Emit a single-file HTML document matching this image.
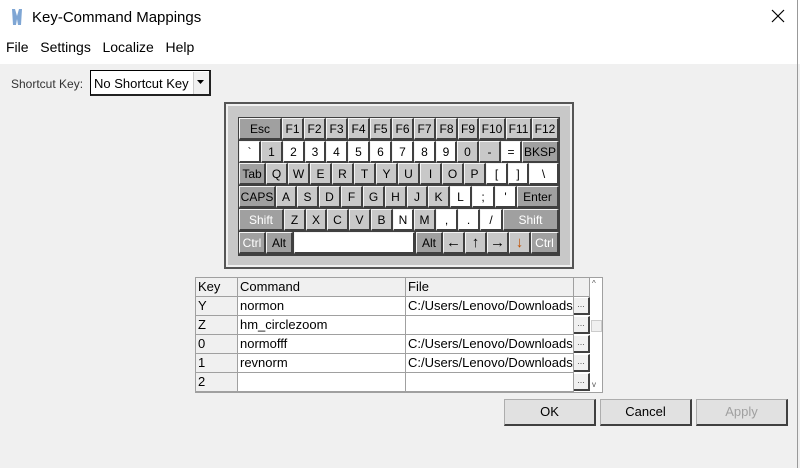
<!DOCTYPE html>
<html><head><style>
*{margin:0;padding:0;box-sizing:border-box}
body{width:800px;height:468px;background:#f0f0f0;font-family:"Liberation Sans",Arial,sans-serif;position:relative;overflow:hidden}
.a{position:absolute}
.k{position:absolute;height:22px;font-size:12px;display:flex;align-items:center;justify-content:center;border-top:1px solid #f4f4f4;border-left:1px solid #f4f4f4;border-right:2px solid #404040;border-bottom:2px solid #404040;color:#000}
.g{background:#c8c8c8}.w{background:#fff}.d{background:#a0a0a0}.wt{color:#fff}
.ar{font-size:15px}
.c{position:absolute;height:19px;border-right:1px solid #a0a0a0;border-bottom:1px solid #a0a0a0;font-size:13px;line-height:18px;padding-left:2px;white-space:nowrap;overflow:hidden}
.btn{position:absolute;top:399px;width:92px;height:27px;background:#e1e1e1;border:1px solid #adadad;border-right:2px solid #404040;border-bottom:2px solid #404040;font-size:13px;text-align:center;line-height:24px}
.dots{position:absolute;width:16px;height:18px;background:#f0f0f0;border-right:2px solid #404040;border-bottom:2px solid #404040;border-top:1px solid #fff;font-size:9px;text-align:center;line-height:12px;color:#555}
</style></head><body>
<div class="a" style="left:0;top:0;width:800px;height:64px;background:#fff"></div>
<div class="a" style="left:797px;top:0;width:1px;height:468px;background:#999"></div>
<svg class="a" style="left:10px;top:8px" width="14" height="18"><path d="M2 1 L5 1 L7 8 L9 1 L12 1 L11 17 L8 17 L7 11 L6 17 L3 17Z" fill="#7fa6d4"/></svg>
<div class="a" style="left:32px;top:9px;font-size:15px">Key-Command Mappings</div>
<svg class="a" style="left:771px;top:9px" width="14" height="14"><path d="M1 1L13 13M13 1L1 13" stroke="#000" stroke-width="1.2"/></svg>
<div class="a" style="left:6px;top:39px;font-size:14px;word-spacing:0">File&nbsp;&nbsp;&nbsp;Settings&nbsp;&nbsp;&nbsp;Localize&nbsp;&nbsp;&nbsp;Help</div>
<div class="a" style="left:11px;top:77px;font-size:12px;color:#333">Shortcut Key:</div>
<div class="a" style="left:90px;top:70px;width:121px;height:26px;background:#fff;border:1px solid #000;border-right:2px solid #222;border-bottom:2px solid #222;font-size:13px;padding:5px 3px">No Shortcut Key</div>
<div class="a" style="left:193px;top:72px;width:16px;height:22px;background:#f0f0f0;border-left:1px solid #ccc"></div>
<svg class="a" style="left:197px;top:80px" width="8" height="5"><path d="M0 0H7L3.5 4Z" fill="#000"/></svg>
<div class="a" style="left:224px;top:102px;width:350px;height:167px;background:#c8c8c8;border:2px solid #555;box-shadow:inset 0 0 0 2px #f0f0f0"></div>
<div class="a" style="left:238px;top:117px;width:322px;height:139px;background:#404040"></div>
<div class="k d" style="left:239px;top:118px;width:43px">Esc</div>
<div class="k g" style="left:282px;top:118px;width:22px">F1</div>
<div class="k g" style="left:304px;top:118px;width:22px">F2</div>
<div class="k g" style="left:326px;top:118px;width:22px">F3</div>
<div class="k g" style="left:348px;top:118px;width:22px">F4</div>
<div class="k g" style="left:370px;top:118px;width:22px">F5</div>
<div class="k g" style="left:392px;top:118px;width:22px">F6</div>
<div class="k g" style="left:414px;top:118px;width:22px">F7</div>
<div class="k g" style="left:436px;top:118px;width:22px">F8</div>
<div class="k g" style="left:458px;top:118px;width:21px">F9</div>
<div class="k g" style="left:479px;top:118px;width:27px">F10</div>
<div class="k g" style="left:506px;top:118px;width:26px">F11</div>
<div class="k g" style="left:532px;top:118px;width:27px">F12</div>
<div class="k w" style="left:239px;top:141px;width:22px">`</div>
<div class="k g" style="left:261px;top:141px;width:22px">1</div>
<div class="k w" style="left:283px;top:141px;width:22px">2</div>
<div class="k w" style="left:305px;top:141px;width:21px">3</div>
<div class="k w" style="left:326px;top:141px;width:22px">4</div>
<div class="k w" style="left:348px;top:141px;width:22px">5</div>
<div class="k w" style="left:370px;top:141px;width:22px">6</div>
<div class="k w" style="left:392px;top:141px;width:22px">7</div>
<div class="k w" style="left:414px;top:141px;width:22px">8</div>
<div class="k w" style="left:436px;top:141px;width:21px">9</div>
<div class="k g" style="left:457px;top:141px;width:22px">0</div>
<div class="k g" style="left:479px;top:141px;width:22px">-</div>
<div class="k w" style="left:501px;top:141px;width:21px">=</div>
<div class="k d" style="left:522px;top:141px;width:37px">BKSP</div>
<div class="k d" style="left:239px;top:163px;width:27px">Tab</div>
<div class="k g" style="left:266px;top:163px;width:22px">Q</div>
<div class="k g" style="left:288px;top:163px;width:22px">W</div>
<div class="k g" style="left:310px;top:163px;width:22px">E</div>
<div class="k g" style="left:332px;top:163px;width:22px">R</div>
<div class="k g" style="left:354px;top:163px;width:22px">T</div>
<div class="k g" style="left:376px;top:163px;width:22px">Y</div>
<div class="k g" style="left:398px;top:163px;width:22px">U</div>
<div class="k g" style="left:420px;top:163px;width:22px">I</div>
<div class="k g" style="left:442px;top:163px;width:22px">O</div>
<div class="k g" style="left:464px;top:163px;width:22px">P</div>
<div class="k w" style="left:486px;top:163px;width:22px">[</div>
<div class="k w" style="left:508px;top:163px;width:21px">]</div>
<div class="k w" style="left:529px;top:163px;width:30px">\</div>
<div class="k d" style="left:239px;top:186px;width:37px">CAPS</div>
<div class="k g" style="left:276px;top:186px;width:21px">A</div>
<div class="k g" style="left:297px;top:186px;width:22px">S</div>
<div class="k g" style="left:319px;top:186px;width:22px">D</div>
<div class="k g" style="left:341px;top:186px;width:22px">F</div>
<div class="k g" style="left:363px;top:186px;width:22px">G</div>
<div class="k g" style="left:385px;top:186px;width:22px">H</div>
<div class="k g" style="left:407px;top:186px;width:21px">J</div>
<div class="k g" style="left:428px;top:186px;width:22px">K</div>
<div class="k w" style="left:450px;top:186px;width:22px">L</div>
<div class="k w" style="left:472px;top:186px;width:23px">;</div>
<div class="k w" style="left:495px;top:186px;width:22px">'</div>
<div class="k d" style="left:517px;top:186px;width:42px">Enter</div>
<div class="k d wt" style="left:239px;top:209px;width:45px">Shift</div>
<div class="k g" style="left:284px;top:209px;width:22px">Z</div>
<div class="k g" style="left:306px;top:209px;width:21px">X</div>
<div class="k g" style="left:327px;top:209px;width:22px">C</div>
<div class="k g" style="left:349px;top:209px;width:22px">V</div>
<div class="k g" style="left:371px;top:209px;width:22px">B</div>
<div class="k w" style="left:393px;top:209px;width:21px">N</div>
<div class="k g" style="left:414px;top:209px;width:22px">M</div>
<div class="k w" style="left:436px;top:209px;width:22px">,</div>
<div class="k w" style="left:458px;top:209px;width:22px">.</div>
<div class="k w" style="left:480px;top:209px;width:23px">/</div>
<div class="k d wt" style="left:503px;top:209px;width:56px">Shift</div>
<div class="k d wt" style="left:239px;top:232px;width:27px">Ctrl</div>
<div class="k d" style="left:266px;top:232px;width:27px">Alt</div>
<div class="k w" style="left:294px;top:232px;width:121px"></div>
<div class="k d" style="left:416px;top:232px;width:27px">Alt</div>
<div class="k g ar" style="left:443px;top:232px;width:22px">←</div>
<div class="k g ar" style="left:465px;top:232px;width:22px">↑</div>
<div class="k g ar" style="left:487px;top:232px;width:22px">→</div>
<div class="k g ar" style="left:509px;top:232px;width:22px;color:#c05000">↓</div>
<div class="k d wt" style="left:531px;top:232px;width:28px">Ctrl</div>
<div class="a" style="left:195px;top:277px;width:408px;height:116px;background:#fff;border:1px solid #a0a0a0"></div>
<div class="c" style="left:196px;top:278px;width:42px;background:#f0f0f0">Key</div>
<div class="c" style="left:238px;top:278px;width:168px;background:#f0f0f0">Command</div>
<div class="c" style="left:406px;top:278px;width:168px;background:#f0f0f0">File</div>
<div class="c" style="left:574px;top:278px;width:16px;background:#f0f0f0"></div>
<div class="c" style="left:196px;top:297px;width:42px;background:#f0f0f0">Y</div>
<div class="c" style="left:238px;top:297px;width:168px">normon</div>
<div class="c" style="left:406px;top:297px;width:168px">C:/Users/Lenovo/Downloads/</div>
<div class="c" style="left:196px;top:316px;width:42px;background:#f0f0f0">Z</div>
<div class="c" style="left:238px;top:316px;width:168px">hm_circlezoom</div>
<div class="c" style="left:406px;top:316px;width:168px"></div>
<div class="c" style="left:196px;top:335px;width:42px;background:#f0f0f0">0</div>
<div class="c" style="left:238px;top:335px;width:168px">normofff</div>
<div class="c" style="left:406px;top:335px;width:168px">C:/Users/Lenovo/Downloads/</div>
<div class="c" style="left:196px;top:354px;width:42px;background:#f0f0f0">1</div>
<div class="c" style="left:238px;top:354px;width:168px">revnorm</div>
<div class="c" style="left:406px;top:354px;width:168px">C:/Users/Lenovo/Downloads/</div>
<div class="c" style="left:196px;top:373px;width:42px;background:#f0f0f0">2</div>
<div class="c" style="left:238px;top:373px;width:168px"></div>
<div class="c" style="left:406px;top:373px;width:168px"></div>
<div class="dots" style="left:574px;top:297px">...</div>
<div class="dots" style="left:574px;top:316px">...</div>
<div class="dots" style="left:574px;top:335px">...</div>
<div class="dots" style="left:574px;top:354px">...</div>
<div class="dots" style="left:574px;top:373px">...</div>
<div class="a" style="left:590px;top:278px;width:12px;height:114px;background:#fff"></div>
<div class="a" style="left:591px;top:320px;width:11px;height:12px;background:#f0f0f0;border:1px solid #ccc"></div>
<div class="a" style="left:592px;top:279px;font-size:8px;color:#555">^</div>
<div class="a" style="left:592px;top:380px;font-size:8px;color:#555">v</div>
<div class="btn" style="left:504px">OK</div>
<div class="btn" style="left:600px">Cancel</div>
<div class="btn" style="left:696px;color:#a0a0a0">Apply</div>
</body></html>
